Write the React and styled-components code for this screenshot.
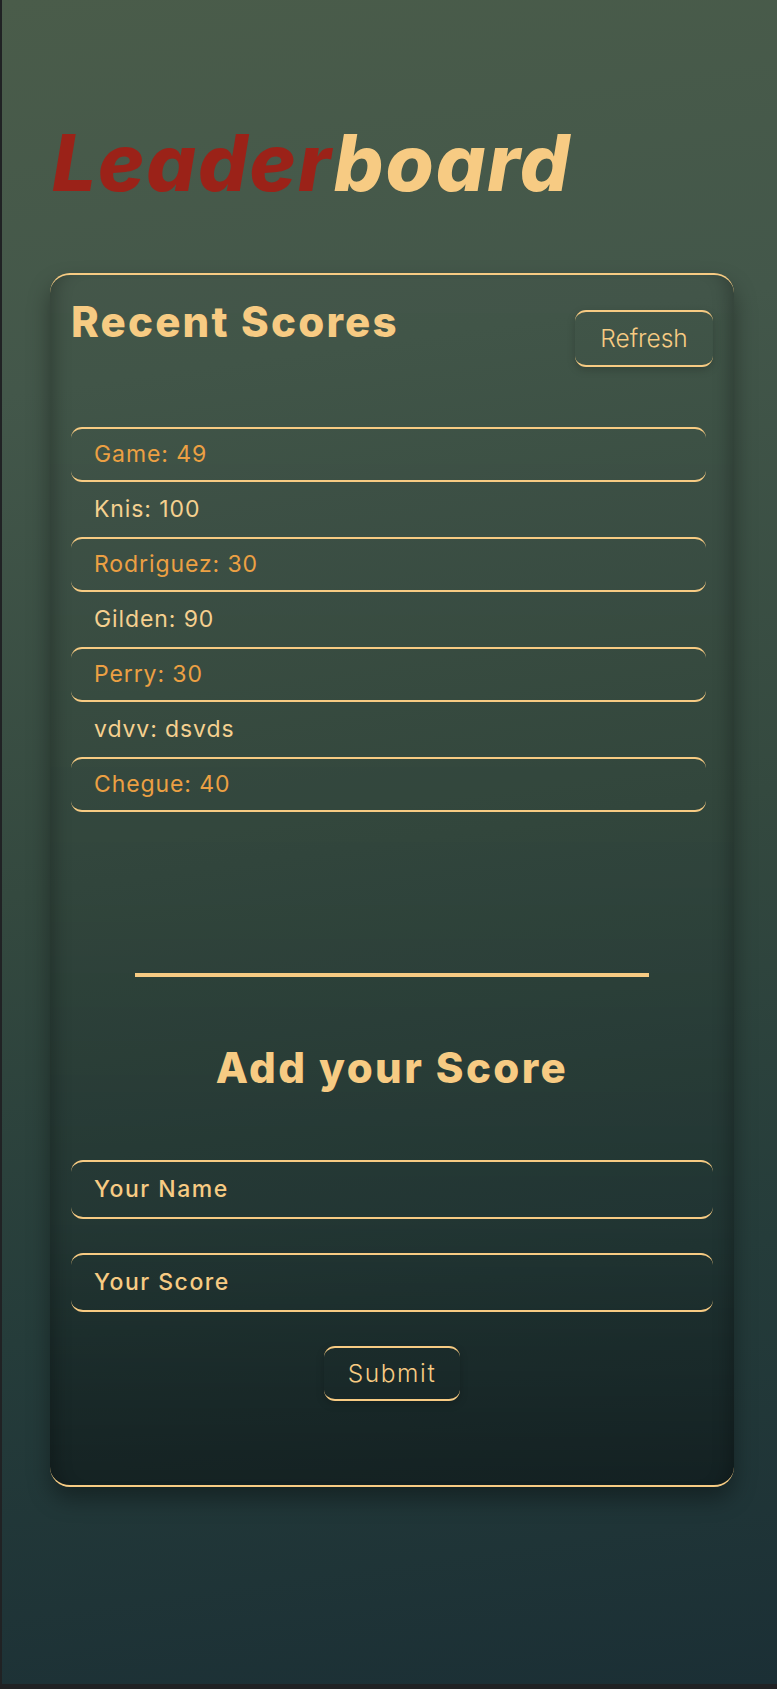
import React from "react";
import styled, { createGlobalStyle } from "styled-components";

const GOLD = "#f7cb83";
const ORANGE = "#eca043";
const PEACH = "#f5d08f";
const RED = "#9b2218";

const Global = createGlobalStyle`
  html, body {
    margin: 0;
    padding: 0;
    background: #202224;
  }
  body {
    font-family: Inter, "Liberation Sans", sans-serif;
  }
  * { box-sizing: border-box; }
`;

const Page = styled.div`
  margin-left: 2px;
  min-height: 1684px;
  background: linear-gradient(172deg, #4a5c4a 0%, #43574a 22%, #34493f 50%, #253c3a 75%, #1b2f35 100%);
  padding-top: 116px;
  padding-bottom: 197px;
`;

const Main = styled.main`
  margin-left: 48px;
  width: 684px;
`;

const Title = styled.h1`
  margin: 0 0 63px;
  padding-left: 2px;
  font-family: Inter, "Liberation Sans", sans-serif;
  font-size: 78px;
  line-height: 1.2;
  font-weight: 800;
  font-style: italic;
  letter-spacing: 1.9px;
`;

const Word = styled.span`
  color: ${(p) => p.$color};
`;

const Card = styled.section`
  width: 684px;
  padding: 22px 21px 84px;
  border-top: 2px solid ${GOLD};
  border-bottom: 2px solid ${GOLD};
  border-radius: 20px;
  background: linear-gradient(
    to bottom,
    rgba(0, 0, 0, 0.02) 0%,
    rgba(0, 0, 0, 0.05) 50%,
    rgba(0, 0, 0, 0.13) 78%,
    rgba(0, 0, 0, 0.38) 100%
  );
  box-shadow: 0 12px 22px rgba(0, 0, 0, 0.35),
    inset 18px 0 16px -12px rgba(0, 0, 0, 0.22),
    inset -18px 0 16px -12px rgba(0, 0, 0, 0.22);
`;

const Header = styled.div`
  display: flex;
  justify-content: space-between;
  align-items: flex-start;
  margin-bottom: 60px;
`;

const Heading = styled.h2`
  margin: 0;
  font-size: 42px;
  line-height: 1.2;
  font-weight: 800;
  letter-spacing: ${(p) => (p.$center ? 2.4 : 2.2)}px;
  color: ${GOLD};
  text-align: ${(p) => (p.$center ? "center" : "left")};
`;

const Button = styled.button`
  margin-top: ${(p) => p.$offset || 0}px;
  width: ${(p) => p.$width}px;
  height: ${(p) => p.$height}px;
  padding: 0;
  background: transparent;
  border: none;
  border-top: 2px solid ${GOLD};
  border-bottom: 2px solid ${GOLD};
  border-radius: 11px;
  box-shadow: 0 3px 8px rgba(0, 0, 0, 0.18);
  color: ${GOLD};
  font-family: Inter, "Liberation Sans", sans-serif;
  font-size: 24.5px;
  font-weight: 300;
  letter-spacing: ${(p) => p.$spacing || 0}px;
  cursor: pointer;
`;

const ScoreList = styled.ul`
  list-style: none;
  margin: 0 7px 0 0;
  padding: 0;
`;

const ScoreRow = styled.li`
  display: flex;
  align-items: center;
  height: 55px;
  padding-left: 23px;
  border-top: 2px solid ${(p) => (p.$highlight ? GOLD : "transparent")};
  border-bottom: 2px solid ${(p) => (p.$highlight ? GOLD : "transparent")};
  border-radius: 11px;
  color: ${(p) => (p.$highlight ? ORANGE : PEACH)};
  font-size: 23px;
  font-weight: 400;
  letter-spacing: 0.9px;
`;

const Divider = styled.hr`
  width: 80%;
  height: 4px;
  margin: 161px auto 66px;
  border: none;
  background: ${GOLD};
`;

const Form = styled.form`
  display: flex;
  flex-direction: column;
  align-items: center;
  gap: 34px;
  margin-top: 67px;
`;

const Input = styled.input`
  width: 100%;
  height: 59px;
  padding: 0 0 0 23px;
  background: transparent;
  border: none;
  border-top: 2px solid ${GOLD};
  border-bottom: 2px solid ${GOLD};
  border-radius: 12px;
  color: ${GOLD};
  font-family: Inter, "Liberation Sans", sans-serif;
  font-size: 23px;
  font-weight: 500;
  letter-spacing: 1.5px;
  outline: none;
  &::placeholder {
    color: ${GOLD};
    opacity: 1;
  }
`;

const scores = [
  ["Game", "49"],
  ["Knis", "100"],
  ["Rodriguez", "30"],
  ["Gilden", "90"],
  ["Perry", "30"],
  ["vdvv", "dsvds"],
  ["Chegue", "40"],
];

export default function App() {
  return (
    <>
      <Global />
      <Page>
        <Main>
          <Title>
            <Word $color={RED}>Leader</Word>
            <Word $color={GOLD}>board</Word>
          </Title>
          <Card>
            <Header>
              <Heading>Recent Scores</Heading>
              <Button type="button" $offset={13} $width={138} $height={57}>
                Refresh
              </Button>
            </Header>
            <ScoreList>
              {scores.map(([name, score], i) => (
                <ScoreRow key={name} $highlight={i % 2 === 0}>
                  {name}: {score}
                </ScoreRow>
              ))}
            </ScoreList>
            <Divider />
            <Heading $center>Add your Score</Heading>
            <Form onSubmit={(e) => e.preventDefault()}>
              <Input type="text" placeholder="Your Name" />
              <Input type="text" placeholder="Your Score" />
              <Button type="submit" $width={136} $height={55} $spacing={1.6}>
                Submit
              </Button>
            </Form>
          </Card>
        </Main>
      </Page>
    </>
  );
}
